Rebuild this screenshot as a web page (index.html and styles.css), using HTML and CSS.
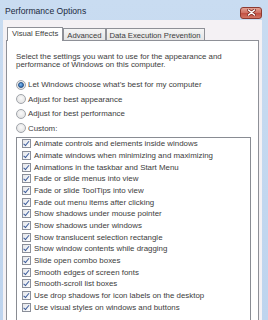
FILE: index.html
```html
<!DOCTYPE html>
<html lang="en">
<head>
    <meta charset="UTF-8">
    <title>Performance Options</title>
    <link rel="stylesheet" href="styles.css">
</head>
<body>
<div class="window">
    <div class="titlebar">
        <span class="title">Performance Options</span>
        <span class="close">
            <svg width="9" height="7" viewBox="0 0 9 7">
                <path d="M1.5 1 L7.5 6 M7.5 1 L1.5 6" stroke="#7d2a22" stroke-width="3" stroke-linecap="round"/>
                <path d="M1.5 1 L7.5 6 M7.5 1 L1.5 6" stroke="#fff" stroke-width="1.6" stroke-linecap="round"/>
            </svg>
        </span>
    </div>
    <div class="client">
        <div class="tabs">
            <div class="tab active">Visual Effects</div>
            <div class="tab">Advanced</div>
            <div class="tab">Data Execution Prevention</div>
        </div>
        <div class="panel">
            <p class="intro">Select the settings you want to use for the appearance and<br>performance of Windows on this computer.</p>
            <div class="options">
                <div class="option"><span class="radio on"></span>Let Windows choose what’s best for my computer</div>
                <div class="option"><span class="radio"></span>Adjust for best appearance</div>
                <div class="option"><span class="radio"></span>Adjust for best performance</div>
                <div class="option"><span class="radio"></span>Custom:</div>
            </div>
            <ul class="effects">
                <li><span class="check"></span>Animate controls and elements inside windows</li>
                <li><span class="check"></span>Animate windows when minimizing and maximizing</li>
                <li><span class="check"></span>Animations in the taskbar and Start Menu</li>
                <li><span class="check"></span>Fade or slide menus into view</li>
                <li><span class="check"></span>Fade or slide ToolTips into view</li>
                <li><span class="check"></span>Fade out menu items after clicking</li>
                <li><span class="check"></span>Show shadows under mouse pointer</li>
                <li><span class="check"></span>Show shadows under windows</li>
                <li><span class="check"></span>Show translucent selection rectangle</li>
                <li><span class="check"></span>Show window contents while dragging</li>
                <li><span class="check"></span>Slide open combo boxes</li>
                <li><span class="check"></span>Smooth edges of screen fonts</li>
                <li><span class="check"></span>Smooth-scroll list boxes</li>
                <li><span class="check"></span>Use drop shadows for icon labels on the desktop</li>
                <li><span class="check"></span>Use visual styles on windows and buttons</li>
            </ul>
        </div>
    </div>
</div>
</body>
</html>
```

FILE: styles.css
```css
body{
    margin: 0;
    font-family: "Liberation Sans", Arial, sans-serif;
    font-size: 7.9px;
    color: #3c3c3c;
}
.window{
    width: 268px;
    height: 320px;
    overflow: hidden;
    display: flex;
    flex-direction: column;
    background: linear-gradient(#c9dcf1, #bed4ee);
}
.titlebar{
    height: 20px;
    flex: none;
    display: flex;
    align-items: center;
    justify-content: space-between;
    padding: 0 6px 0 5px;
    box-sizing: border-box;
}
.title{
    font-size: 8.6px;
    color: #1c2a40;
    margin-top: 2px;
}
.close{
    width: 22px;
    height: 12px;
    margin-top: 5px;
    box-sizing: border-box;
    border: 1px solid #8c3a30;
    border-radius: 3px;
    background: linear-gradient(#e3a193, #cf6e60 50%, #c24f41 51%, #d27565);
    display: flex;
    align-items: center;
    justify-content: center;
}
.client{
    flex: 1;
    display: flex;
    flex-direction: column;
    margin: 0 6px 0 3px;
    padding: 7px 3px 0 3px;
    background-color: #f4f1f4;
    min-height: 0;
}
.tabs{
    display: flex;
    align-items: flex-end;
    height: 13px;
    padding-left: 1px;
    flex: none;
    font-size: 7.7px;
}
.tab{
    height: 12px;
    line-height: 11px;
    padding: 1px 3px 0;
    box-sizing: border-box;
    border: 1px solid #8e9097;
    border-bottom: none;
    background: linear-gradient(#f5f5f5, #e4e4e4);
    white-space: nowrap;
}
.tab.active{
    position: relative;
    z-index: 1;
    height: 14px;
    margin-bottom: -1px;
    padding: 0 4px;
    line-height: 12px;
    background: #fff;
}
.panel{
    flex: 1;
    min-height: 0;
    background: #fff;
    border: 1px solid #8e9097;
    border-bottom: none;
    padding: 11.5px 7px 0 9px;
}
.intro{
    margin: 0;
    line-height: 8.5px;
}
.options{
    margin-top: 8.3px;
}
.option{
    height: 14.4px;
    display: flex;
    align-items: center;
    white-space: nowrap;
}
.radio{
    width: 10px;
    height: 10px;
    margin-right: 2px;
    box-sizing: border-box;
    border: 1px solid #a0a4aa;
    border-radius: 50%;
    background: radial-gradient(circle at 50% 40%, #fafafa, #dcdcdc);
    display: flex;
    align-items: center;
    justify-content: center;
}
.radio.on:after{
    content: '';
    width: 4px;
    height: 4px;
    border-radius: 50%;
    border: 1px solid #234f86;
    background: radial-gradient(circle at 40% 35%, #7fb8ee, #1c5ea8);
}
.effects{
    list-style: none;
    margin: 1.5px 0 0;
    padding: 0 0 0 5px;
    border: 1px solid #898c93;
    height: 200px;
}
.effects li{
    height: 11.7px;
    display: flex;
    align-items: center;
    white-space: nowrap;
}
.check{
    width: 9px;
    height: 9px;
    margin-right: 3px;
    box-sizing: border-box;
    border: 1px solid #8b8f99;
    background: linear-gradient(135deg, #e4e6ea, #fdfdfd);
    position: relative;
}
.check:after{
    content: '';
    position: absolute;
    left: 2.3px;
    top: 0;
    width: 2px;
    height: 4.5px;
    border: solid #3c5c9c;
    border-width: 0 1.5px 1.5px 0;
    transform: rotate(40deg);
}
```
